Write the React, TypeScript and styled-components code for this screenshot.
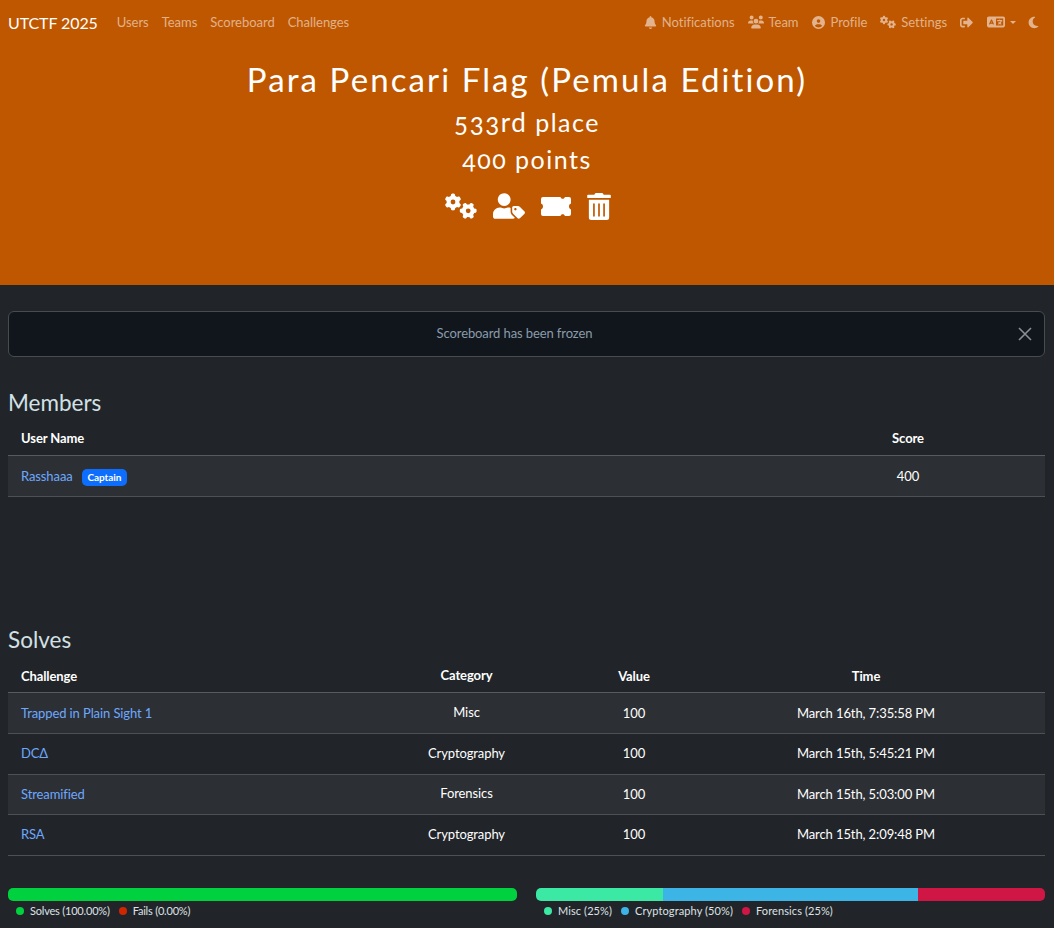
import React from "react";
import styled, { createGlobalStyle } from "styled-components";
import { FaSignOutAlt, FaTrashAlt, FaUserTag } from "react-icons/fa";
import { FaBell, FaCircleUser, FaGears, FaLanguage, FaMoon, FaUsers } from "react-icons/fa6";

const members = [{ name: "Rasshaaa", score: 400 }];

const solves = [
  { name: "Trapped in Plain Sight 1", category: "Misc", value: 100, time: "March 16th, 7:35:58 PM" },
  { name: "DCΔ", category: "Cryptography", value: 100, time: "March 15th, 5:45:21 PM" },
  { name: "Streamified", category: "Forensics", value: 100, time: "March 15th, 5:03:00 PM" },
  { name: "RSA", category: "Cryptography", value: 100, time: "March 15th, 2:09:48 PM" },
];

const scoreBar = [
  { label: "Solves (100.00%)", color: "#00d13f", share: 100 },
  { label: "Fails (0.00%)", color: "#cf2600", share: 0 },
];

const categoryBar = [
  { label: "Misc (25%)", color: "#3be8a4", share: 25 },
  { label: "Cryptography (50%)", color: "#3cb4e6", share: 50 },
  { label: "Forensics (25%)", color: "#d01645", share: 25 },
];

const TicketIcon = () => (
  <svg width="30" height="19" viewBox="0 0 30 19" fill="currentColor">
    <path d="M2 0h17.500c.3 1.200 1.100 1.800 2.200 1.800s1.900-.6 2.200-1.800H28a2 2 0 0 1 2 2v4.500c-1.300.4-2 1.600-2 3s.7 2.600 2 3V17a2 2 0 0 1-2 2h-4.100c-.3-1.200-1.100-1.800-2.200-1.800s-1.900.6-2.200 1.800H2a2 2 0 0 1-2-2v-4.500c1.300-.4 2-1.600 2-3s-.7-2.600-2-3V2a2 2 0 0 1 2-2z" />
  </svg>
);

const CloseIcon = () => (
  <svg width="14" height="14" viewBox="0 0 14 14" stroke="currentColor" strokeWidth="1.6" fill="none">
    <path d="M1 1l12 12M13 1L1 13" />
  </svg>
);

type BarItem = { label: string; color: string; share: number };

const BarChart = ({ items, spacing }: { items: BarItem[]; spacing: string }) => (
  <div>
    <Track>
      {items
        .filter((item) => item.share > 0)
        .map((item) => (
          <Segment key={item.label} color={item.color} style={{ width: `${item.share}%` }} />
        ))}
    </Track>
    <Legend $spacing={spacing}>
      {items.map((item) => (
        <LegendItem key={item.label}>
          <Dot color={item.color} />
          {item.label}
        </LegendItem>
      ))}
    </Legend>
  </div>
);

const App = () => {
  return (
    <>
      <GlobalStyle />
      <Hero>
        <Navbar>
          <Brand>UTCTF 2025</Brand>
          <NavGroup>
            <NavLink>Users</NavLink>
            <NavLink>Teams</NavLink>
            <NavLink>Scoreboard</NavLink>
            <NavLink>Challenges</NavLink>
          </NavGroup>
          <NavRight>
            <NavLink><FaBell /> Notifications</NavLink>
            <NavLink><FaUsers size={16} /> Team</NavLink>
            <ProfileLink><FaCircleUser /> Profile</ProfileLink>
            <NavLink><FaGears size={16} /> Settings</NavLink>
            <LogoutLink><FaSignOutAlt /></LogoutLink>
            <NavLink>
              <FaLanguage size={18} />
              <Caret />
            </NavLink>
            <MoonLink><FaMoon size={13} /></MoonLink>
          </NavRight>
        </Navbar>
        <HeroBody>
          <TeamName>Para Pencari Flag (Pemula Edition)</TeamName>
          <Stat>
            <Place>533rd</Place> place
          </Stat>
          <Stat>400 points</Stat>
          <HeroIcons>
            <FaGears size={32} />
            <FaUserTag size={32} />
            <TicketIcon />
            <TrashIcon />
          </HeroIcons>
        </HeroBody>
      </Hero>
      <Main>
        <Alert>
          Scoreboard has been frozen
          <CloseButton>
            <CloseIcon />
          </CloseButton>
        </Alert>

        <SectionTitle>Members</SectionTitle>
        <MemberTable>
          <thead>
            <tr>
              <Th>User Name</Th>
              <Th $center>Score</Th>
            </tr>
          </thead>
          <tbody>
            {members.map((member) => (
              <Row key={member.name}>
                <MemberTd>
                  <TableLink>{member.name}</TableLink>
                  <Badge>Captain</Badge>
                </MemberTd>
                <Td $center>{member.score}</Td>
              </Row>
            ))}
          </tbody>
        </MemberTable>

        <SolvesTitle>Solves</SolvesTitle>
        <SolvesTable>
          <thead>
            <tr>
              <SolvesTh>Challenge</SolvesTh>
              <SolvesTh $center>
                <Lifted>Category</Lifted>
              </SolvesTh>
              <SolvesTh $center>Value</SolvesTh>
              <SolvesTh $center>Time</SolvesTh>
            </tr>
          </thead>
          <tbody>
            {solves.map((solve) => (
              <Row key={solve.name}>
                <Td>
                  <TableLink>{solve.name}</TableLink>
                </Td>
                <CategoryTd>
                  <CategoryText>{solve.category}</CategoryText>
                </CategoryTd>
                <Td $center>{solve.value}</Td>
                <Td $center>{solve.time}</Td>
              </Row>
            ))}
          </tbody>
        </SolvesTable>

        <Charts>
          <BarChart items={scoreBar} spacing="-0.2px" />
          <BarChart items={categoryBar} spacing="0.1px" />
        </Charts>
      </Main>
    </>
  );
};

export default App;

const GlobalStyle = createGlobalStyle`
  html, body {
    margin: 0;
    background: #212529;
    color: #dee2e6;
    font-family: "Lato", "Liberation Sans", sans-serif;
    font-size: 13px;
    letter-spacing: -0.1px;
    overflow: hidden;
  }
`;

const Hero = styled.header`
  height: 285px;
  background: #bf5700;
`;

const Navbar = styled.nav`
  display: flex;
  align-items: center;
  height: 44px;
  padding: 0 8px;
`;

const Brand = styled.a`
  color: #fff;
  font-size: 16px;
  margin-right: 19px;
`;

const NavGroup = styled.div`
  display: flex;
  gap: 13px;
`;

const NavRight = styled(NavGroup)`
  margin-left: auto;
  padding-right: 6px;
`;

const NavLink = styled.a`
  display: inline-flex;
  align-items: center;
  gap: 5px;
  color: rgba(255, 255, 255, 0.55);
  letter-spacing: -0.03px;
`;

const ProfileLink = styled(NavLink)`
  gap: 6px;
`;

const LogoutLink = styled(NavLink)`
  margin-right: 1px;
`;

const MoonLink = styled(NavLink)`
  margin-left: -2px;
`;

const Caret = styled.span`
  width: 0;
  height: 0;
  border-top: 3px solid currentColor;
  border-left: 3px solid transparent;
  border-right: 3px solid transparent;
`;

const HeroBody = styled.div`
  display: flex;
  flex-direction: column;
  align-items: center;
  color: #fff;
`;

const TeamName = styled.h1`
  margin: 13px 0 3px;
  font-size: 33px;
  font-weight: 400;
  line-height: 44px;
  letter-spacing: 2.1px;
`;

const Stat = styled.div`
  font-size: 25px;
  line-height: 37px;
  letter-spacing: 1.5px;
  font-variant-numeric: oldstyle-nums;
`;

const Place = styled.span`
  font-size: 26px;
`;

const HeroIcons = styled.div`
  display: flex;
  align-items: center;
  gap: 16px;
  margin: 12px 0 0 2px;
`;

const TrashIcon = styled(FaTrashAlt)`
  width: 24px;
  height: 27px;
`;

const Main = styled.main`
  padding: 26px 9px 0 8px;
`;

const Alert = styled.div`
  position: relative;
  display: flex;
  align-items: center;
  justify-content: center;
  box-sizing: border-box;
  height: 46px;
  padding: 0 24px 2px 0;
  background: #10161c;
  border: 1px solid #474c51;
  border-radius: 6px;
  color: #8b9bab;
`;

const CloseButton = styled.span`
  position: absolute;
  right: 12px;
  top: 15px;
  color: #8a8f95;
`;

const SectionTitle = styled.h3`
  margin: 33px 0 0;
  color: #d3e0e6;
  font-size: 22.5px;
  font-weight: 400;
  letter-spacing: 0;
  line-height: 26px;
`;

const SolvesTitle = styled(SectionTitle)`
  margin-top: 130px;
`;

const MemberTable = styled.table`
  width: 100%;
  border-collapse: collapse;
  table-layout: fixed;
  margin-top: 2px;

  th:first-child {
    width: 737px;
  }
`;

const SolvesTable = styled.table`
  width: 100%;
  border-collapse: collapse;
  table-layout: fixed;
  margin-top: 3px;

  th:nth-child(1) {
    width: 318px;
  }
  th:nth-child(2) {
    width: 203px;
  }
  th:nth-child(3) {
    width: 80px;
  }
  tbody tr:not(:first-child) td {
    height: 38px;
    padding-bottom: 2px;
  }
  tbody tr:nth-child(3) td {
    height: 37px;
  }
`;

const Th = styled.th<{ $center?: boolean }>`
  height: 35px;
  padding: 2px 13px 0;
  color: #fff;
  font-weight: 700;
  text-align: ${(p) => (p.$center ? "center" : "left")};
  border-bottom: 1px solid #575b5f;
`;

const SolvesTh = styled(Th)`
  height: 32px;
  padding-top: 4px;
`;

const Row = styled.tr`
  &:nth-child(odd) {
    background: #2c3034;
  }
`;

const Td = styled.td<{ $center?: boolean }>`
  height: 40px;
  padding: 0 13px;
  color: #fff;
  text-align: ${(p) => (p.$center ? "center" : "left")};
  border-bottom: 1px solid #4d5154;
`;

const MemberTd = styled(Td)`
  height: 38px;
  padding-top: 2px;
`;

const CategoryTd = styled(Td)`
  text-align: center;
`;

const Lifted = styled.span`
  position: relative;
  top: -1px;
`;

const CategoryText = styled(Lifted)`
  tr:nth-child(even) & {
    top: 0;
  }
`;

const TableLink = styled.a`
  color: #6ea8fe;
`;

const Badge = styled.span`
  display: inline-block;
  margin-left: 9px;
  padding: 3px 6px;
  border-radius: 5px;
  background: #0d6efd;
  color: #fff;
  font-size: 10px;
  font-weight: 700;
  line-height: 11px;
`;

const Charts = styled.div`
  display: grid;
  grid-template-columns: 1fr 1fr;
  gap: 19px;
  margin-top: 32px;
`;

const Track = styled.div`
  display: flex;
  height: 13px;
  border-radius: 5px;
  overflow: hidden;
`;

const Segment = styled.div<{ color: string }>`
  background: ${(p) => p.color};
`;

const Legend = styled.div<{ $spacing: string }>`
  display: flex;
  gap: 9px;
  padding: 2px 8px 0;
  color: #dee2e6;
  font-size: 11px;
  letter-spacing: ${(p) => p.$spacing};
  line-height: 16px;
`;

const LegendItem = styled.span`
  display: inline-flex;
  align-items: center;
  gap: 6px;
`;

const Dot = styled.i<{ color: string }>`
  width: 8px;
  height: 8px;
  border-radius: 50%;
  background: ${(p) => p.color};
`;
